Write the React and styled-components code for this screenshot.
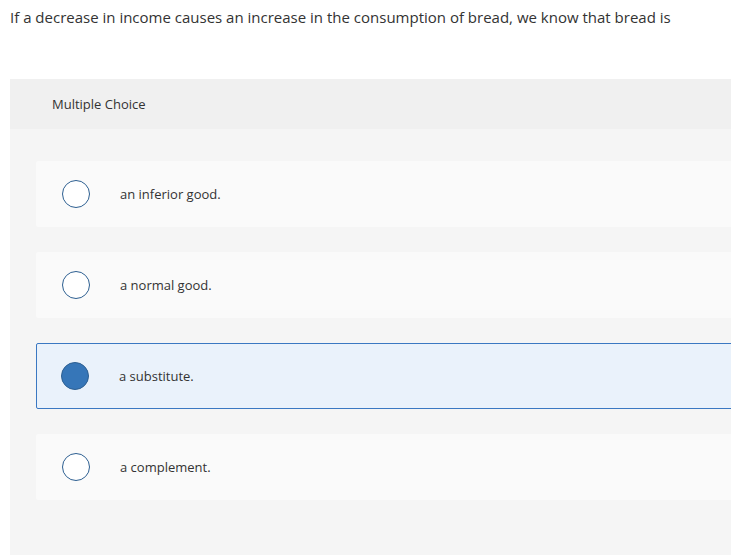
import styled, { createGlobalStyle } from "styled-components";

const GlobalStyle = createGlobalStyle`
  html, body {
    margin: 0;
    padding: 0;
    background: #ffffff;
    overflow: hidden;
    font-family: "Open Sans", "Liberation Sans", sans-serif;
  }
`;

const Page = styled.div`
  padding: 7px 0 0 10px;
  height: 548px;
  overflow: hidden;
`;

const Question = styled.p`
  margin: 0;
  font-size: 15px;
  line-height: 20px;
  color: #333333;
`;

const Panel = styled.section`
  margin-top: 52px;
  width: 780px;
  background: #f5f5f5;
  min-height: 480px;
`;

const Header = styled.div`
  height: 50px;
  display: flex;
  align-items: center;
  padding-left: 42px;
  background: #f0f0f0;
  font-size: 13px;
  color: #333333;
`;

const Options = styled.div`
  display: flex;
  flex-direction: column;
  gap: 25px;
  padding: 32px 0 0 26px;
`;

const Option = styled.label`
  box-sizing: border-box;
  height: 66px;
  display: flex;
  align-items: center;
  gap: 30px;
  padding-left: ${(p) => (p.$selected ? "24px" : "25px")};
  border-radius: 2px;
  border: 1px solid ${(p) => (p.$selected ? "#3b78c2" : "transparent")};
  background: ${(p) => (p.$selected ? "#eaf2fb" : "#fafafa")};
  font-size: 13px;
  color: #333333;
  cursor: pointer;
`;

const Radio = styled.span`
  box-sizing: border-box;
  width: 28px;
  height: 28px;
  flex: none;
  border-radius: 50%;
  border: 1.5px solid #2d5f91;
  background: ${(p) => (p.$selected ? "#3676b8" : "#ffffff")};
`;

const choices = [
  "an inferior good.",
  "a normal good.",
  "a substitute.",
  "a complement.",
];

export default function App() {
  const selected = 2;
  return (
    <>
      <GlobalStyle />
      <Page>
        <Question>
          If a decrease in income causes an increase in the consumption of
          bread, we know that bread is
        </Question>
        <Panel>
          <Header>Multiple Choice</Header>
          <Options>
            {choices.map((c, i) => (
              <Option key={c} $selected={i === selected}>
                <Radio $selected={i === selected} />
                <span>{c}</span>
              </Option>
            ))}
          </Options>
        </Panel>
      </Page>
    </>
  );
}
